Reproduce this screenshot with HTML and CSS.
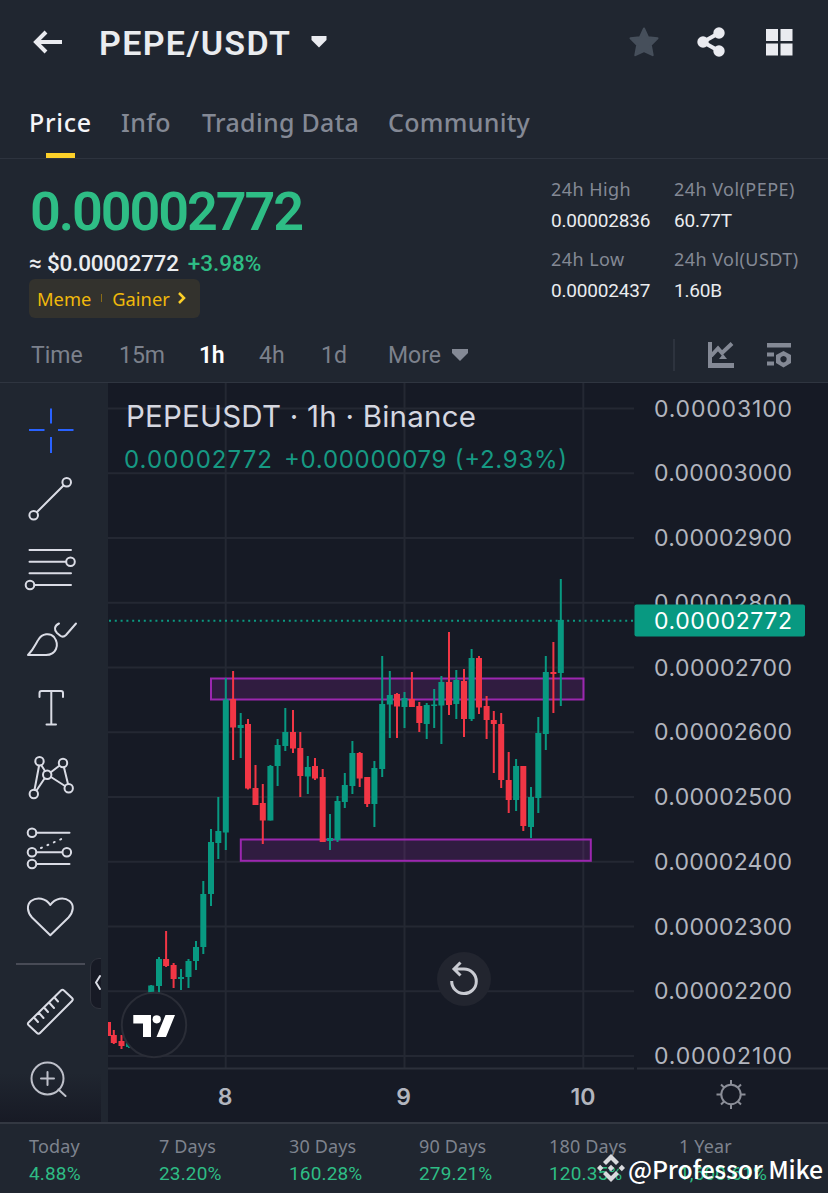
FILE: index.html
```html
<!DOCTYPE html>
<html lang="en">
<head>
  <meta charset="UTF-8" />
  <title>PEPE/USDT</title>
  <link rel="stylesheet" href="styles.css">
</head>

<body>
  <!-- Top bar -->
  <header class="topbar">
    <svg class="back" width="30" height="24" viewBox="0 0 30 24"><path d="M13 2 3 12 13 22M3 12H29" /></svg>
    <h1>PEPE/USDT</h1>
    <svg class="caret" width="16" height="12" viewBox="0 0 16 12"><path d="M0.500 0H15.500V4L8 11.500 0.500 4Z" /></svg>
    <div class="actions">
      <svg width="30" height="30" viewBox="0 0 30 30"><path class="star" d="M15 1.500 19 10.200 28.500 11.300 21.800 18 23.700 28.200 15 24 6.300 28.200 8.200 18 1.500 11.300 11 10.200Z" /></svg>
      <svg width="30" height="30" viewBox="0 0 30 30"><path class="share-line" d="M23 6 7 15 23 24" /><circle cx="23" cy="6" r="5.700" /><circle cx="7" cy="15" r="5.700" /><circle cx="23" cy="24" r="5.700" /></svg>
      <svg width="28" height="28" viewBox="0 0 28 28"><path d="M1 1H13V13H1ZM15.500 1H27.500V13H15.500ZM1 15.500H13V27.500H1ZM15.500 15.500H27.500V27.500H15.500Z" /></svg>
    </div>
  </header>

  <nav class="tabs">
    <a class="active">Price</a>
    <a>Info</a>
    <a>Trading Data</a>
    <a>Community</a>
  </nav>

  <!-- Ticker -->
  <section class="ticker">
    <div class="quote">
      <div class="price">0.00002772</div>
      <div class="approx"><span>≈ $0.00002772</span><span class="up">+3.98%</span></div>
      <div class="tags">
        <span>Meme</span><i></i><span>Gainer</span>
        <svg width="8" height="12" viewBox="0 0 8 12"><path d="M1 1 6 6 1 11" /></svg>
      </div>
    </div>
    <dl class="stats">
      <div><dt>24h High</dt><dd>0.00002836</dd></div>
      <div><dt>24h Vol(PEPE)</dt><dd>60.77T</dd></div>
      <div><dt>24h Low</dt><dd>0.00002437</dd></div>
      <div><dt>24h Vol(USDT)</dt><dd>1.60B</dd></div>
    </dl>
  </section>

  <!-- Intervals -->
  <div class="intervals">
    <span>Time</span><span>15m</span><span class="active">1h</span><span>4h</span><span>1d</span>
    <span class="more">More <svg width="16" height="12" viewBox="0 0 16 12"><path d="M0 0H16V4L8 12 0 4Z" /></svg></span>
    <div class="tools">
      <svg width="28" height="28" viewBox="0 0 28 28"><path d="M1 1H5V22H27V27H1Z" /><path class="line" d="M4 15 11 7.500 15 12 25 2.500" /><path d="M16 13 20 18H12Z" /></svg>
      <svg width="26" height="26" viewBox="0 0 26 26"><path d="M1 1H25V5.500H1ZM1 10.500H8V14.500H1ZM1 19.500H8V23.500H1Z" /><path fill-rule="evenodd" d="M17.500 9 25 13V21L17.500 25.500 10 21V13ZM17.500 14A3.200 3.200 0 1 0 17.510 14Z" /></svg>
    </div>
  </div>

  <!-- Chart -->
  <main>
    <aside class="drawbar">
      <svg class="cross" width="101" height="70" viewBox="0 395 101 70"><path d="M51 408.500V423.500M51 437V453M29 430H44.500M58 430H73.500" /></svg>
      <svg width="101" height="70" viewBox="0 465 101 70"><circle cx="66.700" cy="482.300" r="4.300" /><circle cx="33.700" cy="515.300" r="4.300" /><path d="M63.500 485.500 37 512" /></svg>
      <svg width="101" height="70" viewBox="0 535 101 70"><path d="M29.500 550H71M29.500 561.700H66M29.500 573.300H71M34.500 585H71" /><circle cx="70.500" cy="561.700" r="4.300" /><circle cx="30" cy="585" r="4.300" /></svg>
      <svg width="101" height="70" viewBox="0 605 101 70"><path d="M28 655C34 649 36 643 38.500 639.500C42 633.500 50 632.500 54 637C60 645 56 655 46 655ZM59 623.500C54 626 54 630 57 633L60 635.500Q63 638 66 635L76 623.500" /></svg>
      <svg width="101" height="70" viewBox="0 675 101 70"><path d="M39.500 697V693Q39.500 691 41.500 691H61Q63 691 63 693V697M51.300 691V724.500M46.500 724.500H56" /></svg>
      <svg width="101" height="70" viewBox="0 745 101 70"><path d="M39 766 34.500 790M36.500 790.500 44.500 778.500M50.500 772.500 59 766M64 767.500 68 784M65 786 51 777M41.500 765.500 45 771" /><circle cx="39.500" cy="761.300" r="4.200" /><circle cx="63" cy="763" r="4.200" /><circle cx="47.200" cy="774.700" r="4.200" /><circle cx="33.800" cy="794" r="4.200" /><circle cx="68.700" cy="788.300" r="4.200" /></svg>
      <svg width="101" height="70" viewBox="0 815 101 70"><path d="M36.500 832.800H69.500M36.500 852.200H62M36.500 864H69.500" /><path class="dots" d="M41 848 66 837" /><circle cx="32" cy="832.800" r="4.300" /><circle cx="32" cy="852.200" r="4.300" /><circle cx="66.800" cy="852.200" r="4.300" /><circle cx="32" cy="864" r="4.300" /></svg>
      <svg width="101" height="70" viewBox="0 885 101 70"><path d="M50.300 935.300 32 917.500C27 912 26.500 905 31 901C37 896.500 46 898 50.300 905C55 898 64 896.500 69.500 901C74.500 905 73.500 912 68.500 917.500Z" /></svg>
      <hr>
      <svg width="101" height="70" viewBox="0 976 101 70"><path d="M61 990.500Q62.500 989 64 990.500L72 998Q73.500 999.500 72 1001L40 1033Q38.500 1034.500 37 1033L29 1025.500Q27 1024 28.500 1022.500ZM34.500 1018 38 1022M39 1013 43.500 1018M44.500 1008 48 1012M49.500 1003 54 1008M54.500 997.500 58 1001.500" /></svg>
      <svg class="fade" width="101" height="70" viewBox="0 1046 101 70"><circle cx="47.500" cy="1078.500" r="16" /><path d="M47.500 1072V1085M41 1078.500H54M58.500 1089.500 65.500 1096" /></svg>
      <button class="collapse"><svg width="8" height="16" viewBox="0 0 8 16"><path d="M6 2 2 8.500 6 15" /></svg></button>
    </aside>

    <svg class="chart" width="720" height="739" viewBox="108 383 720 739">
      <g id="grid"></g>
      <path class="axis" d="M108 1068.500H634M637 1068.500H828" />
      <path class="last" d="M109 620.700H634" />
      <rect class="zone" x="211" y="678.500" width="372.500" height="21" />
      <rect class="zone" x="240.800" y="839.500" width="350" height="21.300" />
      <g id="candles"></g>
      <text class="symbol" x="126" y="427" textLength="350">PEPEUSDT · 1h · Binance</text>
      <text class="change" x="124" y="468" textLength="148">0.00002772</text>
      <text class="change" x="284" y="468" textLength="283">+0.00000079 (+2.93%)</text>
      <g id="labels"></g>
      <rect class="last-box" x="634.500" y="604.500" width="170.500" height="32" rx="2" />
      <text class="last-text" x="654" y="628.700" textLength="138">0.00002772</text>
      <g class="days">
        <text x="225" y="1105">8</text>
        <text x="403.700" y="1105">9</text>
        <text x="583" y="1105">10</text>
      </g>
      <g class="sun">
        <circle cx="731" cy="1094.500" r="9.700" />
        <path d="M731 1085V1080M731 1104V1109M721.500 1094.500H716.500M740.500 1094.500H745.500M724.300 1087.800 721 1084.500M737.700 1087.800 741 1084.500M724.300 1101.200 721 1104.500M737.700 1101.200 741 1104.500" />
      </g>
      <g class="reset">
        <circle cx="464" cy="979" r="27" />
        <path d="M451.700 981A12.300 12.300 0 1 0 464 969H454.500M460.500 962.500 454 969 460.500 975.500" />
      </g>
      <g class="tv">
        <circle cx="154" cy="1025" r="32.200" />
        <path d="M133.300 1015H151V1037H143V1023.500H133.300ZM165.500 1015H175L166 1037H156.500Z" />
        <circle class="dot" cx="156.700" cy="1019.300" r="4.100" />
      </g>
    </svg>
  </main>

  <!-- Performance -->
  <footer>
    <div>Today<b>4.88%</b></div>
    <div>7 Days<b>23.20%</b></div>
    <div>30 Days<b>160.28%</b></div>
    <div>90 Days<b>279.21%</b></div>
    <div>180 Days<b>120.35%</b></div>
    <div>1 Year<b>1,600.61%</b></div>
    <p class="watermark">
      <svg width="28" height="28" viewBox="0 0 28 28"><path d="M14 0 22 8 19 11 14 6 9 11 6 8ZM14 28 22 20 19 17 14 22 9 17 6 20ZM14 10.800 17.200 14 14 17.200 10.800 14ZM3.200 10.800 6.400 14 3.200 17.200 0 14ZM24.800 10.800 28 14 24.800 17.200 21.600 14Z" /></svg>
      <span>@Professor Mike</span>
    </p>
  </footer>

  <script src="chart.js"></script>
</body>
</html>
```

FILE: styles.css
```css
body {
  margin: 0;
  width: 828px;
  height: 1193px;
  overflow: hidden;
  background: #202630;
  color: #eaecef;
  font-family: "Roboto", sans-serif;
}

svg {
  flex: none;
  fill: #eaebf0;
}

.topbar {
  display: flex;
  align-items: center;
  box-sizing: border-box;
  height: 84px;
  padding: 0 35px 0 33px;
}

.back {
  fill: none;
  stroke: #eaebf0;
  stroke-width: 4;
}

h1 {
  margin: 2px 0 0 36px;
  width: 190px;
  font-size: 34px;
  font-weight: 600;
  letter-spacing: 1.35px;
  white-space: nowrap;
}

.caret {
  margin-left: 22px;
}

.actions {
  display: flex;
  align-items: center;
  gap: 38px;
  margin-left: auto;
}

.actions svg:nth-child(2) {
  margin-right: 1px;
  margin-left: -1px;
}

.star {
  fill: #464f5b;
  stroke: #464f5b;
  stroke-width: 2;
  stroke-linejoin: round;
}

.share-line {
  fill: none;
  stroke: #eaebf0;
  stroke-width: 4;
}

.tabs {
  display: grid;
  grid-template-columns: 92px 81px 186px auto;
  height: 74px;
  padding-left: 29px;
  border-bottom: 1px solid #2d333e;
  font-family: "Noto Sans", sans-serif;
  font-size: 25px;
  font-weight: 500;
  letter-spacing: 0.3px;
  line-height: 76px;
  color: #848995;
  white-space: nowrap;
}

.tabs a {
  height: 74px;
}

.tabs .active {
  position: relative;
  color: #f5f5f8;
  letter-spacing: 0.7px;
}

.tabs .active::after {
  content: "";
  position: absolute;
  left: 17px;
  bottom: 0;
  width: 29px;
  height: 5px;
  background: #fcd029;
}

.ticker {
  display: flex;
  justify-content: space-between;
  height: 171px;
  padding: 0 29px;
}

.price {
  margin: 20px 0 0 1px;
  font-size: 54px;
  font-weight: 600;
  line-height: 66px;
  letter-spacing: -2.1px;
  color: #2ebd85;
}

.approx {
  display: flex;
  gap: 9px;
  height: 34px;
  font-size: 22.5px;
  font-weight: 500;
  line-height: 36px;
  letter-spacing: -0.22px;
}

.up {
  color: #2ebd85;
  letter-spacing: 0;
}

.tags {
  display: flex;
  align-items: center;
  box-sizing: border-box;
  width: 171px;
  height: 39px;
  padding: 0 0 1px 8px;
  border-radius: 6px;
  background: #33322d;
  color: #f0b90b;
  font-family: "Noto Sans", sans-serif;
  font-size: 18.3px;
}

.tags i {
  width: 1px;
  height: 8px;
  margin: 0 10px;
  background: #8a6c17;
}

.tags svg {
  margin-left: 8px;
  fill: none;
  stroke: #fcd029;
  stroke-width: 2.5;
}

.stats {
  display: grid;
  grid-template-columns: 123px 125px;
  align-content: start;
  margin: 15px 0 0;
  width: 248px;
}

.stats div {
  height: 70px;
}

dt {
  font-family: "Noto Sans", sans-serif;
  font-size: 18px;
  line-height: 30px;
  letter-spacing: 0.45px;
  color: #848995;
  white-space: nowrap;
}

dd {
  margin: 0;
  font-size: 19px;
  line-height: 33px;
  letter-spacing: -0.2px;
}

.intervals {
  display: grid;
  grid-template-columns: 88px 80px 60px 62px 67px 1fr auto;
  align-items: center;
  box-sizing: border-box;
  height: 53px;
  padding: 0 36px 2px 31px;
  border-bottom: 1px solid #2f3540;
  font-size: 23px;
  color: #7c818c;
}

.intervals .active {
  color: #fff;
  font-weight: 600;
  letter-spacing: -0.5px;
}

.intervals svg {
  fill: #848995;
}

.more svg {
  margin: 0 0 2px 5px;
}

.tools {
  display: flex;
  align-items: center;
  gap: 31px;
  height: 32px;
  padding-left: 32px;
  border-left: 2px solid #2d333e;
}

.tools .line {
  fill: none;
  stroke: #848995;
  stroke-width: 4;
}

main {
  display: flex;
  height: 739px;
}

.drawbar {
  position: relative;
  display: flex;
  flex-direction: column;
  box-sizing: border-box;
  width: 101px;
  height: 739px;
  margin-right: 7px;
  padding-top: 12px;
  overflow: hidden;
  background: linear-gradient(#202630 690px, #171a25 739px);
}

.drawbar svg {
  fill: none;
  stroke: #dadce5;
  stroke-width: 2;
  stroke-linecap: round;
  stroke-linejoin: round;
}

.drawbar .cross {
  stroke: #2962ff;
  stroke-linecap: butt;
}

.drawbar .dots {
  stroke-dasharray: 1 6;
}

.drawbar .fade {
  opacity: 0.85;
}

.drawbar hr {
  width: 69px;
  height: 2px;
  margin: 8px 0 11px 16px;
  border: 0;
  background: #484b56;
}

.collapse {
  position: absolute;
  left: 90px;
  top: 575px;
  width: 24px;
  height: 51px;
  padding: 0 0 0 3px;
  border: 1px solid #30333d;
  border-radius: 9px;
  background: #171a25;
  text-align: left;
}

.chart {
  background: #161a25;
  font-family: "Inter", sans-serif;
}

#grid,
.axis {
  fill: none;
  stroke: #242833;
  stroke-width: 2;
}

.axis {
  stroke: #2c303b;
}

.last {
  stroke: #0b9981;
  stroke-width: 2;
  stroke-dasharray: 2 3.8;
}

.up-bar {
  fill: #089981;
}

.down-bar {
  fill: #f23645;
}

.zone {
  fill: rgba(156, 39, 176, 0.2);
  stroke: #9c27b0;
  stroke-width: 2;
}

.symbol {
  fill: #d5d7e0;
  font-size: 29.5px;
}

.change {
  fill: #169983;
  font-size: 24px;
}

#labels {
  fill: #b2b5be;
  font-size: 23px;
}

.last-box {
  fill: #089981;
}

.last-text {
  fill: #fff;
  font-size: 23px;
}

.days {
  fill: #b2b5be;
  font-size: 23px;
  font-weight: 600;
  text-anchor: middle;
}

.sun {
  fill: none;
  stroke: #8b8e98;
  stroke-width: 2;
}

.reset circle {
  fill: #22252f;
}

.reset path {
  fill: none;
  stroke: #c9cbd2;
  stroke-width: 3;
}

.tv {
  fill: #fff;
}

.tv circle {
  fill: #161a25;
  stroke: #2a2d37;
  stroke-width: 2;
}

.tv .dot {
  fill: #fff;
  stroke: none;
}

footer {
  position: relative;
  display: grid;
  grid-template-columns: repeat(6, 130px);
  box-sizing: border-box;
  height: 71px;
  padding: 8px 0 0 29px;
  border-top: 2px solid #333842;
  font-family: "Noto Sans", sans-serif;
  font-size: 18px;
  line-height: 28px;
  letter-spacing: 0.15px;
  color: #7e838e;
}

footer b {
  display: block;
  font-family: "Roboto", sans-serif;
  font-size: 19px;
  font-weight: 400;
  line-height: 27px;
  color: #2ebd85;
}

.watermark {
  position: absolute;
  left: 597px;
  top: 28px;
  display: flex;
  align-items: center;
  gap: 3px;
  margin: 0;
  color: #fff;
  font-family: "Noto Sans CJK SC", sans-serif;
  font-size: 24.8px;
  font-weight: 500;
  letter-spacing: -0.2px;
  line-height: 32px;
  white-space: nowrap;
}

.watermark svg {
  fill: #d9dadd;
}
```

FILE: chart.js
```js
// x, high, low, body top, body bottom, direction
const candles = [
  [108, 1022, 1036, 1022, 1036, "down"],
  [113.8, 1030, 1044, 1035, 1043, "down"],
  [121.5, 1035, 1049, 1041, 1046, "down"],
  [129, 1038, 1048, 1040, 1047, "up"],
  [151.2, 985, 994.5, 985.5, 994.5, "up"],
  [159, 957, 995, 959, 986, "up"],
  [166.1, 931, 967, 959, 966, "down"],
  [173.6, 963, 988, 965, 979, "down"],
  [181, 969, 990, 977, 979, "up"],
  [188.5, 959, 988, 961, 977, "up"],
  [196, 941, 970, 947, 961, "up"],
  [203.3, 881, 954, 894, 947, "up"],
  [211, 829, 906, 842, 894, "up"],
  [218.3, 797, 859, 831, 843, "up"],
  [225.8, 678, 850, 699.5, 832.5, "up"],
  [233.1, 671, 760, 699, 727.5, "down"],
  [240.7, 713, 758, 725, 728, "up"],
  [248, 719, 789.5, 724, 788.5, "down"],
  [255.5, 765, 805, 788, 805, "down"],
  [262.8, 784, 844, 803, 820.5, "down"],
  [270.4, 765, 820.5, 766, 820.5, "up"],
  [277.6, 739, 786, 745, 766, "up"],
  [285.3, 708, 751, 732, 746, "up"],
  [293, 710, 753, 732, 748.5, "down"],
  [300.3, 732, 797, 748, 776, "down"],
  [307.8, 756, 794, 767, 776.5, "up"],
  [315, 758, 780, 766, 778.5, "down"],
  [322.7, 769, 842, 777, 842, "down"],
  [330, 814, 850, 838, 841, "up"],
  [337.5, 796, 842, 801, 840, "up"],
  [344.8, 773, 808, 785, 802, "up"],
  [352.4, 741, 794, 753, 786, "up"],
  [359.7, 752, 787, 753, 778.5, "down"],
  [367.2, 777, 807, 777, 804, "down"],
  [374.4, 761, 827, 768, 804, "up"],
  [382.2, 656, 777, 704, 769, "up"],
  [389.8, 671, 738, 695, 704.5, "up"],
  [397, 693, 738, 694, 706.5, "down"],
  [404.5, 692, 728, 698, 707, "up"],
  [411.9, 672, 707, 699, 707, "down"],
  [419.3, 702, 732, 706, 723, "down"],
  [426.7, 703, 739, 705, 724, "up"],
  [434.2, 689, 728, 704.5, 706, "up"],
  [441.4, 676, 744, 682, 705.5, "up"],
  [449, 632, 715, 682, 705, "down"],
  [456.3, 670, 719, 680, 704, "up"],
  [464, 669, 737, 681, 719, "down"],
  [471.6, 649, 721, 658, 719, "up"],
  [479, 656, 714, 658, 707.5, "down"],
  [486.6, 696, 739, 706, 720, "down"],
  [493.8, 711, 773, 720, 724, "down"],
  [501.2, 713, 788, 724, 780, "down"],
  [508.7, 752, 813, 780, 800, "down"],
  [516.1, 759, 811, 766, 800, "up"],
  [523.3, 766, 831, 766, 826, "down"],
  [531, 787, 838, 797, 827, "up"],
  [538.3, 717, 813, 733, 798, "up"],
  [545.8, 656, 750, 672, 734, "up"],
  [553.4, 642, 713, 672, 674, "down"],
  [560.8, 579, 706, 620, 673, "up"]
];

let bars = "";
for (const [x, high, low, top, bottom, dir] of candles) {
  bars += `<rect class="${dir}-bar" x="${x - 1}" y="${high}" width="2" height="${low - high}" />`;
  bars += `<rect class="${dir}-bar" x="${x - 3}" y="${top}" width="6" height="${bottom - top}" />`;
}
document.getElementById("candles").innerHTML = bars;

let grid = '<path d="M225.700 383V1068M404.500 383V1068M583.300 383V1068" />';
let labels = "";
for (let i = 0; i <= 10; i++) {
  const y = 408.5 + i * 64.75;
  grid += `<path d="M108 ${y}H634" />`;
  labels += `<text x="654" y="${y + 8}" textLength="138">0.0000${3100 - i * 100}</text>`;
}
document.getElementById("grid").innerHTML = grid;
document.getElementById("labels").innerHTML = labels;
```
